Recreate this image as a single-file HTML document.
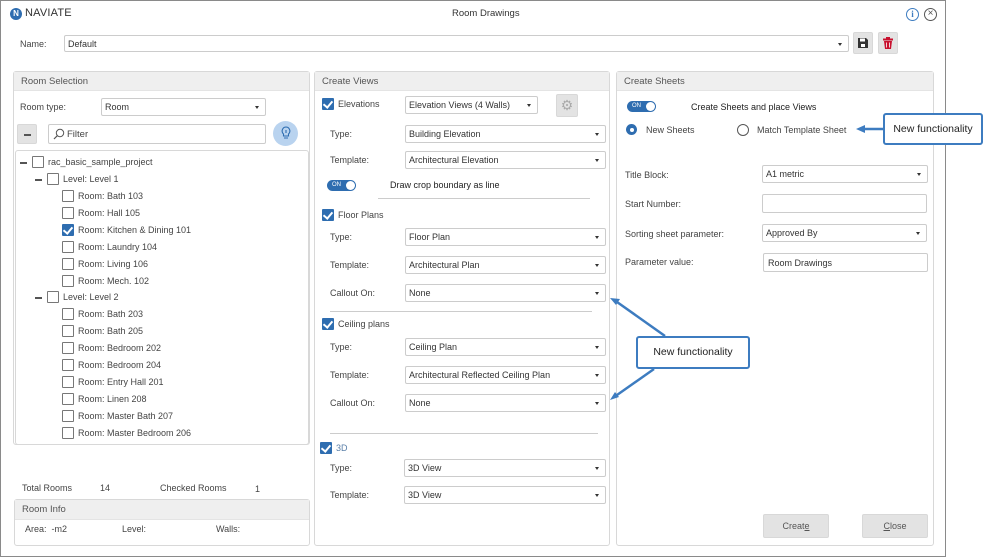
<!DOCTYPE html>
<html><head><style>
*{box-sizing:border-box;margin:0;padding:0}
body{width:1000px;height:558px;background:#fff;position:relative;font-family:"Liberation Sans",sans-serif;font-size:9px;color:#444;overflow:hidden}
.a{position:absolute}
.win{left:0;top:0;width:946px;height:557px;border:1px solid #8a8a8a;background:#fff}
.panel{border:1px solid #d8d8d8;border-radius:3px;background:#fff}
.hdr{background:#efefef;height:19px;line-height:19px;padding-left:7px;font-size:9.5px;color:#555;border-bottom:1px solid #e4e4e4}
.dd{border:1px solid #ccc;border-radius:2px;background:#fff;height:18px;line-height:16px;padding-left:3px;color:#333;font-size:9px}
.dd:after{content:"";position:absolute;right:6px;top:7px;border-left:2.5px solid transparent;border-right:2.5px solid transparent;border-top:3px solid #333}
.cb{width:12px;height:12px;border:1px solid #777;border-radius:1px;background:#fff}
.cbc{width:12px;height:12px;background:#2e6db0;border-radius:1px}
.cbc:after{content:"";position:absolute;left:3px;top:1px;width:4px;height:7px;border:solid #fff;border-width:0 2px 2px 0;transform:rotate(40deg)}
.mn{width:7px;height:2px;background:#555}
.tg{width:29px;height:11px;border-radius:6px;background:#2e6db0;color:#fff;font-size:6px;line-height:11px;padding-left:5px}
.tg:after{content:"";position:absolute;right:1px;top:1px;width:9px;height:9px;border-radius:50%;background:#fff}
.line{height:1px;background:#ccc}
.btn{background:#e3e3e3;border:1px solid #d8d8d8;border-radius:2px;text-align:center;color:#555}
.call{border:2px solid #3d7cc0;border-radius:3px;background:#fff;color:#222;font-size:10.5px;text-align:center}
#sn:after{display:none}
</style></head><body>
<div class="a win"></div>
<div class="a" style="left:10px;top:8px;width:12px;height:12px;border-radius:50%;background:#2e6db0;color:#fff;font-size:8px;font-weight:bold;text-align:center;line-height:12px">N</div>
<div class="a" style="left:25px;top:7px;font-size:11px;color:#333;letter-spacing:0.2px">NAVIATE</div>
<div class="a" style="left:452px;top:8px;font-size:9.5px;color:#333">Room Drawings</div>
<div class="a" style="left:906px;top:8px;width:13px;height:13px;border:1.3px solid #3d7cc0;border-radius:50%;color:#3d7cc0;font-size:9px;font-weight:bold;text-align:center;line-height:11px;font-family:'Liberation Serif',serif">i</div>
<div class="a" style="left:924px;top:8px;width:13px;height:13px;border:1.3px solid #555;border-radius:50%;color:#555;font-size:10px;text-align:center;line-height:10px">×</div>
<div class="a" style="left:20px;top:39px">Name:</div>
<div class="a dd" style="left:64px;top:35px;width:785px;height:17px">Default</div>
<div class="a btn" style="left:853px;top:32px;width:20px;height:22px"><svg width="12" height="12" viewBox="0 0 12 12" style="margin-top:4px"><path d="M1 1h8l2 2v8H1z" fill="#333"/><rect x="3" y="1.5" width="5" height="3" fill="#fff"/><rect x="4" y="7" width="4" height="3" fill="#fff"/></svg></div>
<div class="a btn" style="left:878px;top:32px;width:20px;height:22px"><svg width="12" height="13" viewBox="0 0 12 13" style="margin-top:4px"><rect x="1" y="1.5" width="10" height="2" fill="#c8102e"/><rect x="4" y="0" width="4" height="2" fill="#c8102e"/><path d="M2 4h8l-1 8H3z" fill="#c8102e"/><path d="M4.5 5.5v5M7.5 5.5v5" stroke="#fff" stroke-width="0.8"/></svg></div>

<div class="a panel" style="left:13px;top:71px;width:297px;height:374px"><div class="hdr">Room Selection</div></div>
<div class="a" style="left:20px;top:102px">Room type:</div>
<div class="a dd" style="left:101px;top:98px;width:165px">Room</div>
<div class="a btn" style="left:17px;top:124px;width:20px;height:20px"><div class="a mn" style="left:6px;top:9px"></div></div>
<div class="a" style="left:48px;top:124px;width:218px;height:20px;border:1px solid #ccc;border-radius:2px"><svg class="a" style="left:4px;top:3px" width="12" height="12" viewBox="0 0 12 12"><circle cx="7" cy="5" r="3.7" fill="none" stroke="#555" stroke-width="1"/><path d="M4.3 7.7L1 11" stroke="#555" stroke-width="1.2"/></svg><span class="a" style="left:18px;top:4px;font-size:9.5px">Filter</span></div>
<div class="a" style="left:273px;top:121px;width:25px;height:25px;border-radius:50%;background:#b9d3ef;text-align:center"><svg width="12" height="14" viewBox="0 0 12 14" style="margin-top:5px"><path d="M6 1a4 4 0 0 0-2.5 7v2h5V8A4 4 0 0 0 6 1z" fill="none" stroke="#2e6db0" stroke-width="1.1"/><path d="M4 12h4M6 4v3" stroke="#2e6db0" stroke-width="1.1"/></svg></div>
<div class="a" style="left:15px;top:150px;width:294px;height:295px;border:1px solid #d8d8d8;border-radius:3px"></div>
<div class="a mn" style="left:20px;top:162px"></div><div class="a cb" style="left:32px;top:156px"></div><div class="a" style="left:48px;top:157px">rac_basic_sample_project</div>
<div class="a mn" style="left:35px;top:179px"></div><div class="a cb" style="left:47px;top:173px"></div><div class="a" style="left:63px;top:174px">Level: Level 1</div>
<div class="a cb" style="left:62px;top:190px"></div><div class="a" style="left:78px;top:191px">Room: Bath 103</div>
<div class="a cb" style="left:62px;top:207px"></div><div class="a" style="left:78px;top:208px">Room: Hall 105</div>
<div class="a cbc" style="left:62px;top:224px"></div><div class="a" style="left:78px;top:225px">Room: Kitchen &amp; Dining 101</div>
<div class="a cb" style="left:62px;top:241px"></div><div class="a" style="left:78px;top:242px">Room: Laundry 104</div>
<div class="a cb" style="left:62px;top:258px"></div><div class="a" style="left:78px;top:259px">Room: Living 106</div>
<div class="a cb" style="left:62px;top:275px"></div><div class="a" style="left:78px;top:276px">Room: Mech. 102</div>
<div class="a mn" style="left:35px;top:297px"></div><div class="a cb" style="left:47px;top:291px"></div><div class="a" style="left:63px;top:292px">Level: Level 2</div>
<div class="a cb" style="left:62px;top:308px"></div><div class="a" style="left:78px;top:309px">Room: Bath 203</div>
<div class="a cb" style="left:62px;top:325px"></div><div class="a" style="left:78px;top:326px">Room: Bath 205</div>
<div class="a cb" style="left:62px;top:342px"></div><div class="a" style="left:78px;top:343px">Room: Bedroom 202</div>
<div class="a cb" style="left:62px;top:359px"></div><div class="a" style="left:78px;top:360px">Room: Bedroom 204</div>
<div class="a cb" style="left:62px;top:376px"></div><div class="a" style="left:78px;top:377px">Room: Entry Hall 201</div>
<div class="a cb" style="left:62px;top:393px"></div><div class="a" style="left:78px;top:394px">Room: Linen 208</div>
<div class="a cb" style="left:62px;top:410px"></div><div class="a" style="left:78px;top:411px">Room: Master Bath 207</div>
<div class="a cb" style="left:62px;top:427px"></div><div class="a" style="left:78px;top:428px">Room: Master Bedroom 206</div>
<div class="a" style="left:22px;top:483px">Total Rooms</div><div class="a" style="left:100px;top:483px">14</div>
<div class="a" style="left:160px;top:483px">Checked Rooms</div><div class="a" style="left:255px;top:484px">1</div>
<div class="a panel" style="left:14px;top:499px;width:296px;height:47px"><div class="hdr" style="height:20px">Room Info</div></div>
<div class="a" style="left:25px;top:524px">Area:&nbsp; -m2</div><div class="a" style="left:122px;top:524px">Level:</div><div class="a" style="left:216px;top:524px">Walls:</div>

<div class="a panel" style="left:314px;top:71px;width:296px;height:475px"><div class="hdr">Create Views</div></div>
<div class="a cbc" style="left:322px;top:98px"></div><div class="a" style="left:338px;top:99px">Elevations</div>
<div class="a dd" style="left:405px;top:96px;width:133px">Elevation Views (4 Walls)</div>
<div class="a btn" style="left:556px;top:94px;width:22px;height:23px;font-size:14px;line-height:21px;color:#aaa">⚙</div>
<div class="a" style="left:330px;top:129px">Type:</div><div class="a dd" style="left:405px;top:125px;width:201px">Building Elevation</div>
<div class="a" style="left:330px;top:155px">Template:</div><div class="a dd" style="left:405px;top:151px;width:201px">Architectural Elevation</div>
<div class="a tg" style="left:327px;top:180px;line-height:10px">ON</div><div class="a" style="left:390px;top:180px;color:#222">Draw crop boundary as line</div>
<div class="a line" style="left:378px;top:198px;width:212px"></div>
<div class="a cbc" style="left:322px;top:209px"></div><div class="a" style="left:338px;top:210px">Floor Plans</div>
<div class="a" style="left:330px;top:232px">Type:</div><div class="a dd" style="left:405px;top:228px;width:201px">Floor Plan</div>
<div class="a" style="left:330px;top:260px">Template:</div><div class="a dd" style="left:405px;top:256px;width:201px">Architectural Plan</div>
<div class="a" style="left:330px;top:288px">Callout On:</div><div class="a dd" style="left:405px;top:284px;width:201px">None</div>
<div class="a line" style="left:330px;top:311px;width:262px"></div>
<div class="a cbc" style="left:322px;top:318px"></div><div class="a" style="left:338px;top:319px">Ceiling plans</div>
<div class="a" style="left:330px;top:342px">Type:</div><div class="a dd" style="left:405px;top:338px;width:201px">Ceiling Plan</div>
<div class="a" style="left:330px;top:370px">Template:</div><div class="a dd" style="left:405px;top:366px;width:201px">Architectural Reflected Ceiling Plan</div>
<div class="a" style="left:330px;top:398px">Callout On:</div><div class="a dd" style="left:405px;top:394px;width:201px">None</div>
<div class="a line" style="left:330px;top:433px;width:268px"></div>
<div class="a cbc" style="left:320px;top:442px"></div><div class="a" style="left:336px;top:443px;color:#5a7fa8">3D</div>
<div class="a" style="left:330px;top:463px">Type:</div><div class="a dd" style="left:404px;top:459px;width:202px">3D View</div>
<div class="a" style="left:330px;top:490px">Template:</div><div class="a dd" style="left:404px;top:486px;width:202px">3D View</div>

<div class="a panel" style="left:616px;top:71px;width:318px;height:475px"><div class="hdr">Create Sheets</div></div>
<div class="a tg" style="left:627px;top:101px;line-height:10px">ON</div><div class="a" style="left:691px;top:102px;color:#222">Create Sheets and place Views</div>
<div class="a" style="left:626px;top:124px;width:11px;height:11px;border-radius:50%;background:#2e6db0"><div class="a" style="left:3.5px;top:3.5px;width:4px;height:4px;border-radius:50%;background:#fff"></div></div>
<div class="a" style="left:646px;top:125px">New Sheets</div>
<div class="a" style="left:737px;top:124px;width:12px;height:12px;border-radius:50%;border:1px solid #555"></div>
<div class="a" style="left:757px;top:125px">Match Template Sheet</div>
<div class="a" style="left:625px;top:170px">Title Block:</div><div class="a dd" style="left:762px;top:165px;width:166px">A1 metric</div>
<div class="a" style="left:625px;top:199px">Start Number:</div><div class="a dd" style="left:762px;top:194px;width:165px;height:19px" id="sn"></div>
<div class="a" style="left:625px;top:229px">Sorting sheet parameter:</div><div class="a dd" style="left:762px;top:224px;width:165px">Approved By</div>
<div class="a" style="left:625px;top:257px">Parameter value:</div><div class="a" style="left:763px;top:253px;width:165px;height:19px;border:1px solid #ccc;border-radius:2px;padding:4px 0 0 4px;color:#333">Room Drawings</div>
<div class="a btn" style="left:763px;top:514px;width:66px;height:24px;line-height:22px">Creat<u>e</u></div>
<div class="a btn" style="left:862px;top:514px;width:66px;height:24px;line-height:22px"><u>C</u>lose</div>

<svg class="a" style="left:0;top:0" width="1000" height="558">
<g stroke="#3d7cc0" stroke-width="2.5" fill="#3d7cc0">
<line x1="883" y1="129" x2="864" y2="129"/><path d="M856 129l9-4v8z" stroke="none"/>
<line x1="665" y1="336" x2="617" y2="302"/><path d="M610 298l10 1-4 6z" stroke="none"/>
<line x1="654" y1="369" x2="617" y2="395"/><path d="M610 400l5-8 4 5z" stroke="none"/>
</g></svg>
<div class="a call" style="left:883px;top:113px;width:100px;height:32px;line-height:28px">New functionality</div>
<div class="a call" style="left:636px;top:336px;width:114px;height:33px;line-height:29px">New functionality</div>
</body></html>
